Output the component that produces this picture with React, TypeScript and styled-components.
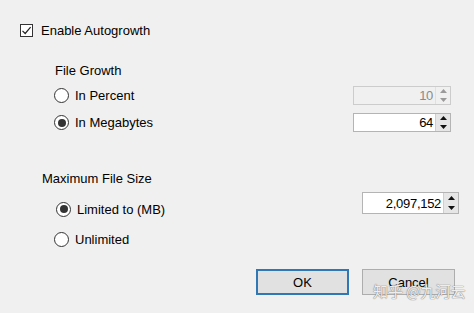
import styled, { createGlobalStyle } from 'styled-components'

const GlobalStyle = createGlobalStyle`
  html, body {
    margin: 0;
    padding: 0;
    background: #f0f0f0;
  }
  body {
    font-family: "Liberation Sans", Arial, sans-serif;
    font-size: 13px;
    color: #000;
  }
`

export default function App() {
  return (
    <>
      <GlobalStyle />
      <Dialog>
        <CheckRow>
          <CheckBox>
            <svg width='11' height='11' viewBox='0 0 11 11'>
              <path d='M1.5 5.8 L4.2 8.5 L9.6 2.2' fill='none' stroke='#222' strokeWidth='1.2' />
            </svg>
          </CheckBox>
          Enable Autogrowth
        </CheckRow>

        <GroupLabel $indent={55} $top={26}>File Growth</GroupLabel>
        <OptionRow $top={7} $right={23}>
          <Option $indent={54}>
            <Radio />
            In Percent
          </Option>
          <Spinner value='10' disabled width={98} />
        </OptionRow>
        <OptionRow $top={8} $right={23}>
          <Option $indent={54}>
            <Radio checked />
            In Megabytes
          </Option>
          <Spinner value='64' width={98} />
        </OptionRow>

        <GroupLabel $indent={42} $top={39}>Maximum File Size</GroupLabel>
        <LimitRow>
          <Option $indent={56}>
            <Radio checked />
            Limited to (MB)
          </Option>
          <Spinner value='2,097,152' width={97} height={22} />
        </LimitRow>
        <UnlimitedRow>
          <Option $indent={54}>
            <Radio />
            Unlimited
          </Option>
        </UnlimitedRow>

        <ButtonBar>
          <Button $primary>OK</Button>
          <Button>Cancel</Button>
        </ButtonBar>
        <Watermark>知乎 @九河云</Watermark>
      </Dialog>
    </>
  )
}

function Radio({ checked }: { checked?: boolean }) {
  return <RadioCircle>{checked && <RadioDot />}</RadioCircle>
}

function Spinner({ value, disabled, width, height = 19 }: { value: string; disabled?: boolean; width: number; height?: number }) {
  const arrow = disabled ? '#9a9a9a' : '#111'
  return (
    <SpinBox $disabled={disabled} style={{ width, height }}>
      <SpinValue $disabled={disabled}>{value}</SpinValue>
      <SpinButtons $disabled={disabled}>
        <SpinHalf>
          <svg width='7' height='4' viewBox='0 0 7 4'>
            <path d='M0 4 L3.5 0 L7 4 Z' fill={arrow} />
          </svg>
        </SpinHalf>
        <SpinHalf>
          <svg width='7' height='4' viewBox='0 0 7 4'>
            <path d='M0 0 L3.5 4 L7 0 Z' fill={arrow} />
          </svg>
        </SpinHalf>
      </SpinButtons>
    </SpinBox>
  )
}

const Dialog = styled.div`
  position: relative;
  width: 474px;
  height: 313px;
  box-sizing: border-box;
  padding-top: 24px;
  display: flex;
  flex-direction: column;
  background: #f0f0f0;
  overflow: hidden;
`

const CheckRow = styled.label`
  display: flex;
  align-items: center;
  gap: 8px;
  height: 13px;
  padding-left: 20px;
  font-size: 13px;
`

const CheckBox = styled.span`
  width: 13px;
  height: 13px;
  box-sizing: border-box;
  border: 1px solid #333;
  background: #fff;
  display: flex;
  align-items: center;
  justify-content: center;
`

const GroupLabel = styled.div<{ $indent: number; $top: number }>`
  height: 16px;
  line-height: 16px;
  margin-top: ${p => p.$top}px;
  padding-left: ${p => p.$indent}px;
  font-size: 13px;
`

const OptionRow = styled.div<{ $top: number; $right: number }>`
  display: flex;
  align-items: center;
  justify-content: space-between;
  height: 19px;
  margin-top: ${p => p.$top}px;
  padding-right: ${p => p.$right}px;
`

const LimitRow = styled.div`
  display: flex;
  align-items: flex-start;
  justify-content: space-between;
  height: 22px;
  margin-top: 5px;
  padding-right: 15px;

  & > label {
    margin-top: 9px;
  }
`

const UnlimitedRow = styled.div`
  display: flex;
  height: 16px;
  margin-top: 17px;
`

const Option = styled.label<{ $indent: number }>`
  display: flex;
  align-items: center;
  gap: 6px;
  height: 16px;
  padding-left: ${p => p.$indent}px;
  font-size: 13px;
`

const RadioCircle = styled.span`
  width: 15px;
  height: 15px;
  box-sizing: border-box;
  border: 1px solid #333;
  border-radius: 50%;
  background: #fff;
  display: flex;
  align-items: center;
  justify-content: center;
`

const RadioDot = styled.span`
  width: 8px;
  height: 8px;
  border-radius: 50%;
  background: #333;
`

const SpinBox = styled.div<{ $disabled?: boolean }>`
  display: flex;
  box-sizing: border-box;
  border: 1px solid ${p => (p.$disabled ? '#cccccc' : '#b4b4b4')};
  background: ${p => (p.$disabled ? '#f0f0f0' : '#fff')};
`

const SpinValue = styled.div<{ $disabled?: boolean }>`
  flex: 1;
  display: flex;
  align-items: center;
  justify-content: flex-end;
  padding-right: 2px;
  font-size: 13px;
  letter-spacing: -0.3px;
  color: ${p => (p.$disabled ? '#8a8a8a' : '#000')};
`

const SpinButtons = styled.div<{ $disabled?: boolean }>`
  width: 14px;
  display: flex;
  flex-direction: column;
  background: ${p => (p.$disabled ? '#f0f0f0' : '#e6e6e6')};
  border-left: 1px solid ${p => (p.$disabled ? '#e0e0e0' : '#cfcfcf')};
`

const SpinHalf = styled.div`
  flex: 1;
  display: flex;
  align-items: center;
  justify-content: center;
`

const ButtonBar = styled.div`
  display: flex;
  justify-content: flex-end;
  gap: 13px;
  margin-top: 22px;
  padding-right: 19px;
`

const Button = styled.button<{ $primary?: boolean }>`
  width: 93px;
  height: 26px;
  box-sizing: border-box;
  background: #e1e1e1;
  border: ${p => (p.$primary ? '2px solid #2f78b4' : '1px solid #adadad')};
  font-family: "Liberation Sans", Arial, sans-serif;
  font-size: 13px;
  color: #000;
  padding: 0;
`

const Watermark = styled.div`
  position: absolute;
  left: 373px;
  top: 281px;
  white-space: nowrap;
  font-family: "Noto Sans CJK SC", sans-serif;
  font-size: 15px;
  line-height: 20px;
  color: rgba(255, 255, 255, 0.9);
  text-shadow: 0 0 1px #777, 0 0 1px #777;
`
